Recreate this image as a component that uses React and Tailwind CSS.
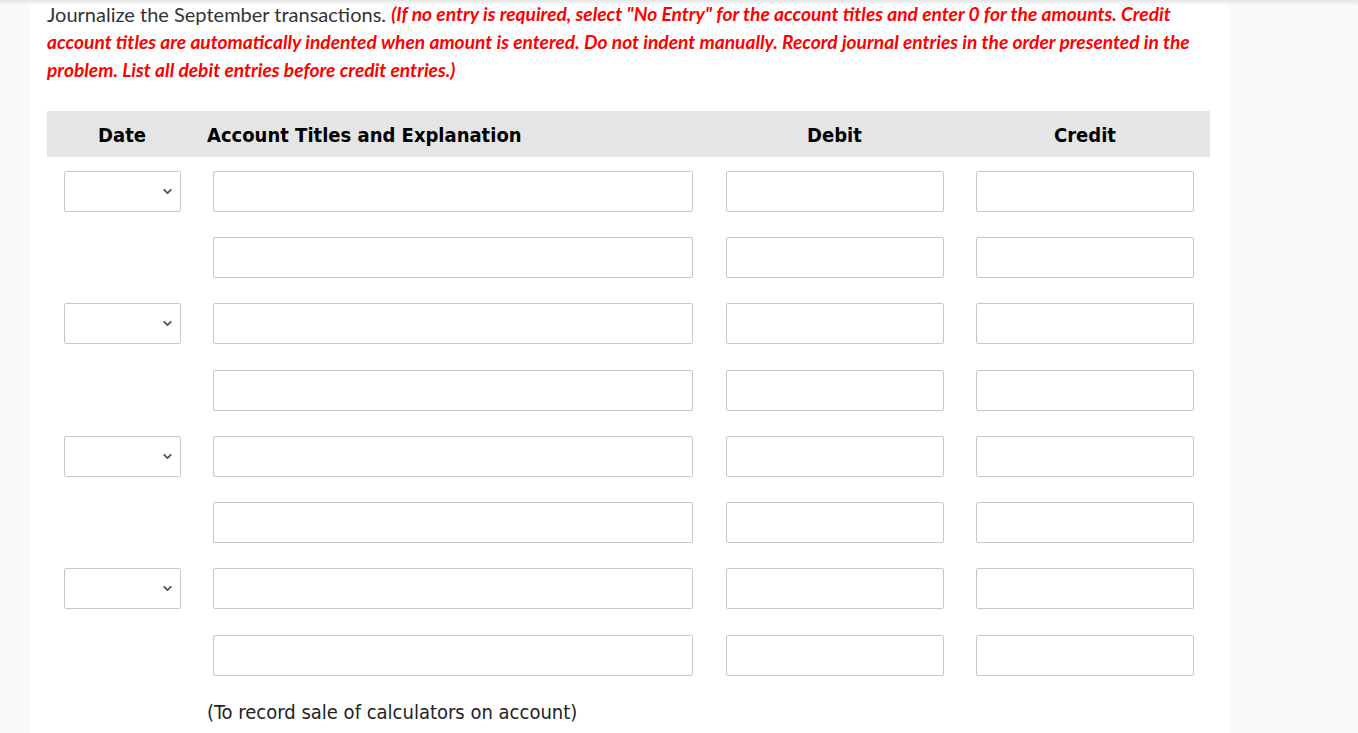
import { ChevronDown } from 'lucide-react'

// each row: whether it has a date select, and its top margin
const ROWS = [
  { date: true, gap: 'mt-0' },
  { date: false, gap: 'mt-[25px]' },
  { date: true, gap: 'mt-[25px]' },
  { date: false, gap: 'mt-[26px]' },
  { date: true, gap: 'mt-[25px]' },
  { date: false, gap: 'mt-[25px]' },
  { date: true, gap: 'mt-[25px]' },
  { date: false, gap: 'mt-[26px]' },
]

function Box({ className = '' }) {
  return <div className={`h-[41px] rounded-[2px] border border-[#c8c8c8] bg-white ${className}`} />
}

function DateSelect() {
  return (
    <div className="flex h-[41px] w-[117px] items-center justify-end rounded-[2px] border border-[#c8c8c8] bg-white pr-[6px]">
      <ChevronDown className="h-[13px] w-[13px] text-[#555]" strokeWidth={3.5} />
    </div>
  )
}

export default function App() {
  return (
    <div className="relative min-h-[733px] w-full bg-[#fafafa]">
      {/* top shadow */}
      <div className="pointer-events-none absolute inset-x-0 top-0 h-[6px] bg-gradient-to-b from-[#e6e6e6] to-transparent" />

      <div className="ml-[29px] min-h-[733px] w-[1200px] bg-white pl-[18px] pr-[19px]">
        {/* Instructions */}
        <p className="h-[84px] font-['Lato',sans-serif] text-[20px] leading-[28px] text-[#333]">
          Journalize the September transactions.{' '}
          <span className="align-top text-[19.2px] leading-[28px] font-bold italic text-[#ff0000]">
            (If no entry is required, select "No Entry" for the account titles and enter 0 for the amounts. Credit
            account titles are automatically indented when amount is entered. Do not indent manually. Record journal
            entries in the order presented in the problem. List all debit entries before credit entries.)
          </span>
        </p>

        {/* Journal table */}
        <div className="mt-[27px] font-['DejaVu_Sans_Condensed','Liberation_Sans',sans-serif]">
          <div className="grid h-[46px] grid-cols-[150px_512px_251px_250px] items-center bg-[#e5e5e5] pt-[2px] text-[20px] font-bold text-black">
            <div className="text-center">Date</div>
            <div className="pl-[10px]">Account Titles and Explanation</div>
            <div className="text-center">Debit</div>
            <div className="text-center">Credit</div>
          </div>

          <div className="flex flex-col pt-[14px]">
            {ROWS.map((row, i) => (
              <div key={i} className={`grid grid-cols-[150px_512px_251px_250px] items-center ${row.gap}`}>
                <div className="flex justify-center">{row.date && <DateSelect />}</div>
                <div className="px-[16px]">
                  <Box />
                </div>
                <div className="pl-[17px] pr-[16px]">
                  <Box />
                </div>
                <div className="pl-[16px] pr-[16px]">
                  <Box />
                </div>
              </div>
            ))}
          </div>

          <div className="pl-[160px] pt-[24px] text-[20px] leading-[24px] text-[#222]">
            (To record sale of calculators on account)
          </div>
        </div>
      </div>
    </div>
  )
}
